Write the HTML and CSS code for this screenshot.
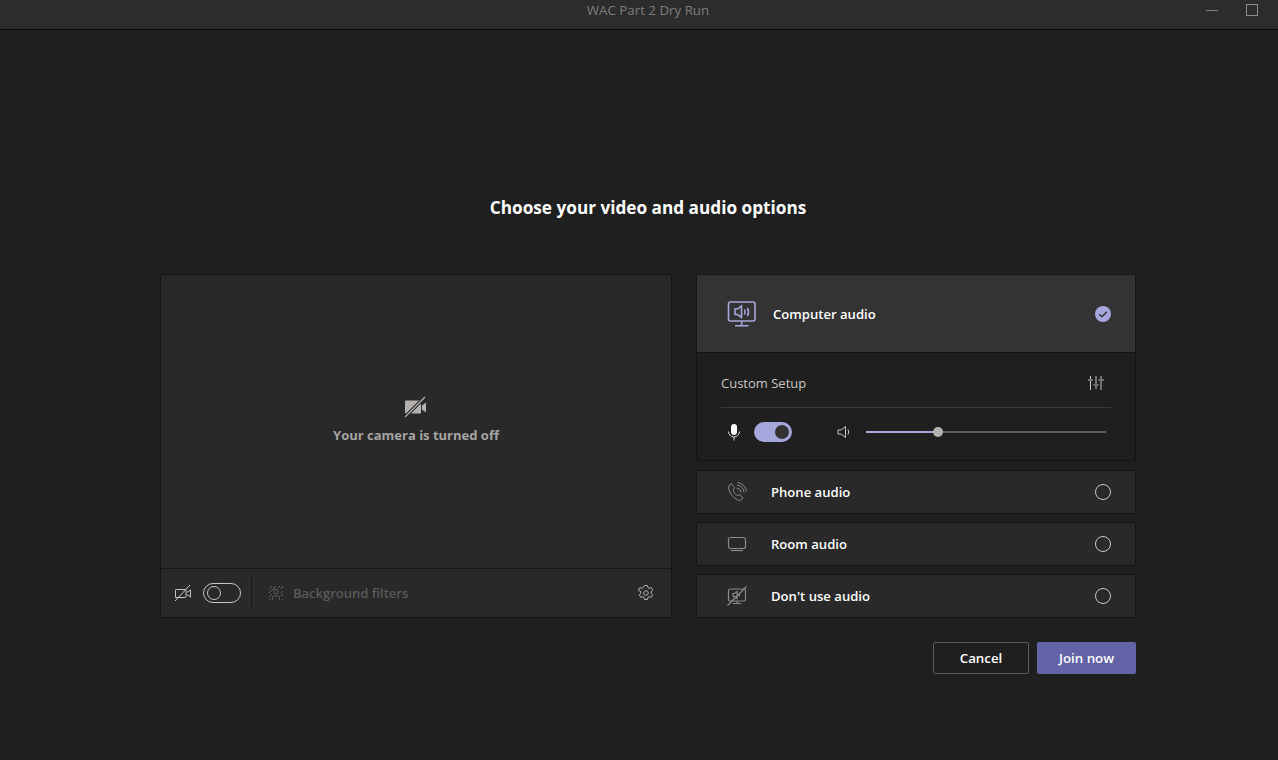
FILE: index.html
```html
<!DOCTYPE html>
<html lang="en">

<head>
    <meta charset="UTF-8">
    <title>WAC Part 2 Dry Run</title>
    <link rel="stylesheet" href="styles.css">
</head>

<body>
    <header class="titlebar">
        <span class="titlebar-name">WAC Part 2 Dry Run</span>
        <div class="window-buttons">
            <span class="win-min"></span>
            <span class="win-max"></span>
        </div>
    </header>

    <main class="prejoin">
        <h1>Choose your video and audio options</h1>

        <div class="panels">
            <section class="video-panel">
                <div class="video-preview">
                    <svg class="camera-off" width="24" height="24" viewBox="0 0 24 24">
                        <path d="M2 5.500h14a1 1 0 0 1 1 1v11a1 1 0 0 1-1 1H2a1 1 0 0 1-1-1v-11a1 1 0 0 1 1-1z" fill="#b3b0ad" />
                        <path d="M18 10.500l4-3v10l-4-3z" fill="#b3b0ad" />
                        <path d="M1 22L21 2" stroke="#292929" stroke-width="3.400" />
                        <path d="M1 22L21 2" stroke="#b3b0ad" stroke-width="1.200" />
                    </svg>
                    <p>Your camera is turned off</p>
                </div>
                <div class="video-toolbar">
                    <svg class="cam-small" width="18" height="18" viewBox="0 0 18 18" fill="none" stroke="#c8c6c4">
                        <path d="M2.500 5.500h9a.8.8 0 0 1 .5.8v6.400a.8.8 0 0 1-.8.8H1.500V6.300a.8.8 0 0 1 1-.8z" />
                        <path d="M13 8.500l3.500-2.500v7L13 10.500" />
                        <path d="M1 17L16 1" />
                    </svg>
                    <div class="toggle toggle-off"><span></span></div>
                    <div class="toolbar-divider"></div>
                    <svg class="bg-icon" width="16" height="16" viewBox="0 0 16 16" fill="none" stroke="#5f5f5f">
                        <path d="M1 4l3-3M1 8l7-7M6 3l2-2M10 3l2-2M13 4l2-3M13 8l2-2M1 12l3-3M13 11l2-2M14 15l1-1M1 15l2-2" />
                        <circle cx="8" cy="6.500" r="2.200" />
                        <path d="M4.500 15v-2.500a1.500 1.500 0 0 1 1.500-1.500h4a1.500 1.500 0 0 1 1.500 1.500V15" />
                    </svg>
                    <span class="bg-label">Background filters</span>
                    <svg class="gear" width="18" height="18" viewBox="0 0 18 18" fill="none" stroke="#b3b0ad">
                        <circle cx="9" cy="9" r="2.300" />
                        <path d="M7.500 1.500h3l.5 2.200 1.100.6 2.100-.7 1.500 2.600-1.600 1.500v1.600l1.600 1.500-1.500 2.600-2.100-.7-1.100.6-.5 2.200h-3l-.5-2.200-1.100-.6-2.100.7-1.500-2.600 1.600-1.500V7.700L1.300 6.200l1.500-2.600 2.100.7L6 3.700z" stroke-linejoin="round" />
                    </svg>
                </div>
            </section>

            <section class="audio-panel">
                <div class="audio-selected">
                    <div class="audio-head">
                        <svg class="monitor" width="30" height="26" viewBox="0 0 30 26" fill="none" stroke="#a6a7dc" stroke-width="1.600">
                            <rect x="1.500" y="1" width="26.500" height="19" rx="2" />
                            <path d="M8 8h2.500l4-3v11.500l-4-3H8z" />
                            <path d="M17.500 8.500q1.200 2.500 0 5M20.500 7q2 4 0 8" />
                            <path d="M14.700 20.500v3.500M8 24.700h13.500" />
                        </svg>
                        <span class="audio-name">Computer audio</span>
                        <svg class="check" width="16" height="16" viewBox="0 0 16 16">
                            <circle cx="8" cy="8" r="8" fill="#a6a7dc" />
                            <path d="M4.200 8.200l2.700 2.500 5-5" fill="none" stroke="#333" stroke-width="1.500" />
                        </svg>
                    </div>
                    <div class="audio-setup">
                        <div class="setup-row">
                            <span class="setup-label">Custom Setup</span>
                            <svg width="16" height="14" viewBox="0 0 16 14" stroke="#c8c6c4" fill="none">
                                <path d="M2.500 0v3M2.500 5v9M0 4h5M8 0v8M8 10v3M5.500 9h5M13 0v3M13 5v9M10.500 4H16" />
                            </svg>
                        </div>
                        <div class="device-row">
                            <svg class="mic" width="14" height="18" viewBox="0 0 14 18">
                                <rect x="4" y="1" width="6" height="11" rx="3" fill="#fff" />
                                <path d="M1.500 8.500a5.500 5.500 0 0 0 11 0M7 14v3.500" fill="none" stroke="#d6d6d6" />
                            </svg>
                            <div class="toggle toggle-on"><span></span></div>
                            <svg class="speaker" width="14" height="14" viewBox="0 0 14 14" fill="none" stroke="#c8c6c4">
                                <path d="M1 5h3l4.500-3.500v11L4 9H1z" />
                                <path d="M11 4.500q1.500 2.500 0 5" />
                            </svg>
                            <div class="volume">
                                <div class="volume-fill"></div>
                                <div class="volume-knob"></div>
                            </div>
                        </div>
                    </div>
                </div>

                <div class="audio-option">
                    <svg width="20" height="20" viewBox="0 0 20 20" fill="none" stroke="#8a8a8a">
                        <path d="M2 3.500l2.500-2 3 4-1.500 2.500c.5 2.500 2.500 4.500 4.500 5.500l2.500-1 3 3.500-2.500 2.500C8 18.500 0 10 2 3.500z" stroke-linejoin="round" />
                        <path d="M9.500 6a5 5 0 0 1 4.500 4.500M10 3a8 8 0 0 1 7 7.500M10.500 .5a10.500 10.500 0 0 1 9 9" />
                    </svg>
                    <span class="audio-name">Phone audio</span>
                    <span class="radio"></span>
                </div>
                <div class="audio-option">
                    <svg width="20" height="20" viewBox="0 0 20 20" fill="none" stroke="#8a8a8a" stroke-width="1.200">
                        <rect x="1.500" y="3.500" width="17" height="11" rx="2" />
                        <path d="M4 16.500h12" />
                    </svg>
                    <span class="audio-name">Room audio</span>
                    <span class="radio"></span>
                </div>
                <div class="audio-option">
                    <svg width="20" height="20" viewBox="0 0 20 20" fill="none" stroke="#8a8a8a" stroke-width="1.200">
                        <rect x="1.500" y="3" width="17" height="12" rx="1.500" />
                        <path d="M6 7.500h1.500l2.500-2v7l-2.500-2H6zM12 7.500q1 1.500 0 3M6 17.500h8M10 15v2.500" />
                        <path d="M0.500 19.500L19.500 0.500" />
                    </svg>
                    <span class="audio-name">Don't use audio</span>
                    <span class="radio"></span>
                </div>

                <div class="actions">
                    <button class="btn-cancel">Cancel</button>
                    <button class="btn-join">Join now</button>
                </div>
            </section>
        </div>
    </main>
</body>

</html>
```

FILE: styles.css
```css
* {
    margin: 0;
    padding: 0;
    box-sizing: border-box;
}

body {
    width: 1278px;
    height: 760px;
    overflow: hidden;
    background-color: #1f1f1f;
    color: #fff;
    font-family: "Open Sans", "Noto Sans", sans-serif;
}

.titlebar {
    height: 30px;
    background-color: #2d2c2c;
    border-bottom: 1px solid #0b0b0b;
    display: flex;
    align-items: center;
    justify-content: center;
    position: relative;
}

.titlebar-name {
    font-size: 13.300px;
    color: #7d7d7d;
    margin-top: -9px;
    margin-left: 18px;
}

.window-buttons {
    position: absolute;
    right: 20px;
    top: 4px;
    display: flex;
    align-items: center;
    gap: 28px;
}

.win-min {
    width: 12px;
    height: 1px;
    background-color: #7d7d7d;
}

.win-max {
    width: 12px;
    height: 12px;
    border: 1px solid #8a8a8a;
}

.prejoin {
    padding: 167px 142px 0 160px;
}

.prejoin h1 {
    font-size: 17.200px;
    line-height: 22px;
    font-weight: 700;
    text-align: center;
    margin-bottom: 55px;
}

.panels {
    display: flex;
    gap: 24px;
    align-items: flex-start;
}

.video-panel {
    width: 512px;
    height: 344px;
    background-color: #292929;
    border: 1px solid #141414;
    border-radius: 2px;
    display: flex;
    flex-direction: column;
}

.video-preview {
    height: 294px;
    border-bottom: 1px solid #171717;
    display: flex;
    flex-direction: column;
    align-items: center;
    padding-top: 120px;
}

.video-preview p {
    font-size: 13px;
    line-height: 18px;
    font-weight: 700;
    color: #a6a4a2;
    margin-top: 7px;
}

.video-toolbar {
    flex: 1;
    display: flex;
    align-items: center;
    padding-left: 13px;
    padding-right: 16px;
}

.toggle {
    width: 38px;
    height: 20px;
    border-radius: 10px;
    display: flex;
    align-items: center;
    padding: 0 3px;
}

.toggle span {
    width: 14px;
    height: 14px;
    border-radius: 50%;
}

.toggle-off {
    border: 1px solid #c8c6c4;
    margin-left: 11px;
}

.toggle-off span {
    border: 1px solid #c8c6c4;
}

.toggle-on {
    background-color: #a6a7dc;
    justify-content: flex-end;
    margin-left: 13px;
}

.toggle-on span {
    background-color: #333;
}

.toolbar-divider {
    width: 1px;
    height: 34px;
    background-color: #1a1a1a;
    margin: 0 16px 0 10px;
}

.bg-label {
    flex: 1;
    font-size: 13px;
    font-weight: 600;
    color: #5a5a5a;
    margin-left: 9px;
}

.audio-panel {
    width: 440px;
}

.audio-selected {
    height: 187px;
    background-color: #1f1f1f;
    border: 1px solid #141414;
    border-radius: 2px;
    margin-bottom: 9px;
}

.audio-head {
    height: 78px;
    background-color: #333;
    border-bottom: 1px solid #141414;
    display: flex;
    align-items: center;
    padding: 0 24px 0 30px;
}

.audio-name {
    flex: 1;
    font-size: 13.100px;
    font-weight: 600;
    color: #fff;
}

.audio-head .audio-name {
    margin-left: 16px;
}

.audio-setup {
    padding: 0 24px;
}

.setup-row {
    height: 55px;
    padding-top: 6px;
    display: flex;
    align-items: center;
    justify-content: space-between;
    border-bottom: 1px solid #3b3a39;
    padding-right: 7px;
}

.setup-label {
    font-size: 13px;
    color: #c8c6c4;
}

.device-row {
    display: flex;
    align-items: center;
    height: 48px;
    padding-left: 6px;
}

.speaker {
    margin-left: 45px;
}

.volume {
    width: 240px;
    height: 2px;
    background-color: #605e5c;
    margin-left: 15px;
    position: relative;
}

.volume-fill {
    width: 72px;
    height: 2px;
    background-color: #a6a7dc;
}

.volume-knob {
    position: absolute;
    left: 67px;
    top: -4px;
    width: 10px;
    height: 10px;
    border-radius: 50%;
    background-color: #b3b0ad;
}

.audio-option {
    height: 44px;
    background-color: #292929;
    border: 1px solid #141414;
    border-radius: 2px;
    display: flex;
    align-items: center;
    padding: 0 24px 0 30px;
    margin-bottom: 8px;
}

.audio-option .audio-name {
    margin-left: 24px;
}

.radio {
    width: 16px;
    height: 16px;
    border: 1px solid #c8c6c4;
    border-radius: 50%;
}

.actions {
    display: flex;
    justify-content: flex-end;
    gap: 8px;
    margin-top: 24px;
}

.actions button {
    height: 32px;
    font-family: inherit;
    font-size: 13.300px;
    font-weight: 600;
    color: #fff;
    border-radius: 2px;
}

.btn-cancel {
    width: 96px;
    background-color: #1f1f1f;
    border: 1px solid #5c5c5c;
}

.btn-join {
    width: 99px;
    background-color: #6264a7;
    border: none;
}
```
